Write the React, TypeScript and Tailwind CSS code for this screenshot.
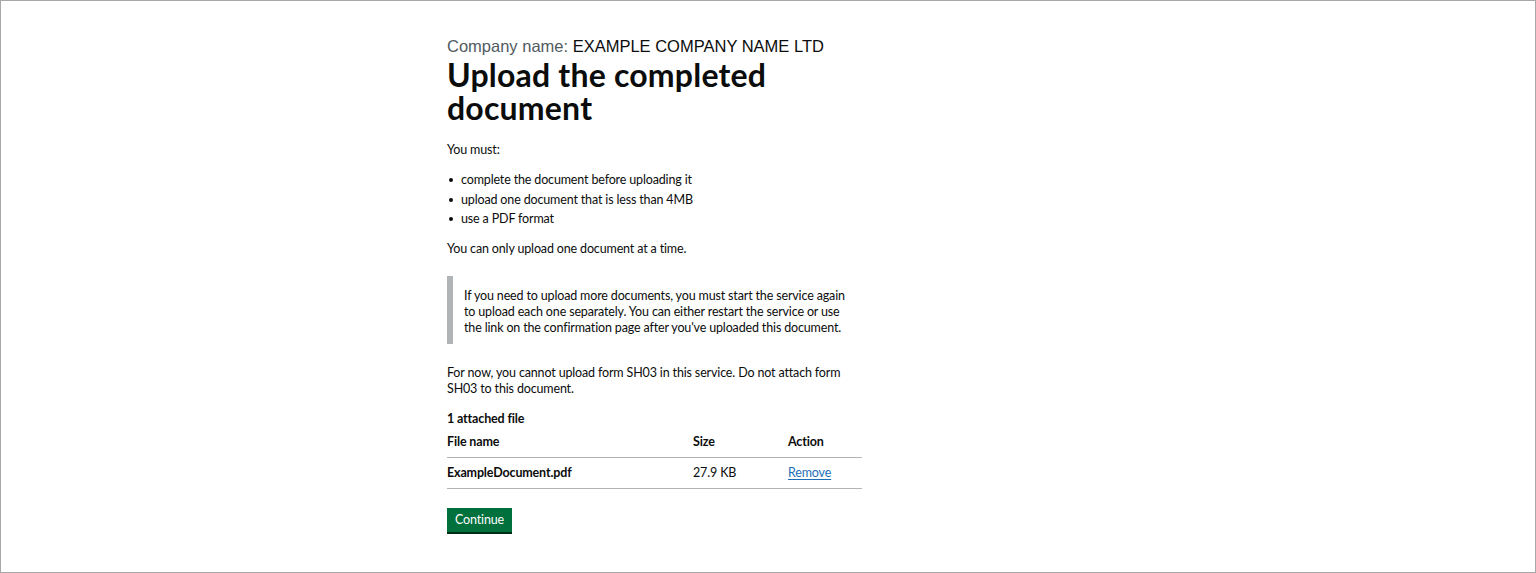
export default function App() {
  return (
    <div className="h-[573px] w-[1536px] border border-[#a8a8a8] bg-white overflow-hidden">
      <main
        className="ml-[446px] w-[416px] pt-[36px] text-[#0b0c0c]"
        style={{ fontFamily: 'Lato, "Noto Sans", Arial, sans-serif' }}
      >
        <p
          className="text-[16.5px] leading-[19px] text-[#505a5f]"
          style={{ fontFamily: '"Liberation Sans", Arial, sans-serif' }}
        >
          Company name: <span className="text-[#0b0c0c]">EXAMPLE COMPANY NAME LTD</span>
        </p>
        <h1 className="mt-[2px] text-[32px] font-bold leading-[33px] tracking-[0.2px]">
          Upload the completed document
        </h1>

        <div className="mt-[18px] text-[12.5px] leading-[16px] tracking-[-0.15px]">
          <p>You must:</p>
          <ul className="mt-[14px] flex flex-col gap-[3.5px]">
            <li className="flex items-center">
              <span className="mr-[8px] ml-[2px] h-[4px] w-[4px] rounded-full bg-[#0b0c0c]" />
              complete the document before uploading it
            </li>
            <li className="flex items-center">
              <span className="mr-[8px] ml-[2px] h-[4px] w-[4px] rounded-full bg-[#0b0c0c]" />
              upload one document that is less than 4MB
            </li>
            <li className="flex items-center">
              <span className="mr-[8px] ml-[2px] h-[4px] w-[4px] rounded-full bg-[#0b0c0c]" />
              use a PDF format
            </li>
          </ul>
          <p className="mt-[14px]">You can only upload one document at a time.</p>

          {/* inset text */}
          <div className="mt-[19px] h-[68px] border-l-[6px] border-[#b1b4b6] pl-[11px] pt-[12px]">
            <p className="w-[410px]">
              If you need to upload more documents, you must start the service again
              <br />
              to upload each one separately. You can either restart the service or use
              <br />
              the link on the confirmation page after you've uploaded this document.
            </p>
          </div>

          <p className="mt-[21px] w-[405px]">
            For now, you cannot upload form SH03 in this service. Do not attach form SH03 to this
            document.
          </p>

          <p className="mt-[14px] font-bold">1 attached file</p>
          <table className="mt-[7px] w-[415px] border-collapse text-left">
            <thead>
              <tr className="border-b border-[#b1b4b6]">
                <th className="w-[246px] pb-[7px] font-bold">File name</th>
                <th className="w-[95px] pb-[7px] font-bold">Size</th>
                <th className="pb-[7px] font-bold">Action</th>
              </tr>
            </thead>
            <tbody>
              <tr className="border-b border-[#b1b4b6]">
                <td className="py-[7px] font-bold">ExampleDocument.pdf</td>
                <td className="py-[7px]">27.9 KB</td>
                <td className="py-[7px]">
                  <a href="#" className="text-[#1d70b8] underline underline-offset-2">
                    Remove
                  </a>
                </td>
              </tr>
            </tbody>
          </table>

          <button className="mt-[19px] h-[24px] bg-[#00703c] px-[8px] text-[12.5px] leading-[24px] text-white shadow-[0_2px_0_#002d18]">
            Continue
          </button>
        </div>
      </main>
    </div>
  );
}
